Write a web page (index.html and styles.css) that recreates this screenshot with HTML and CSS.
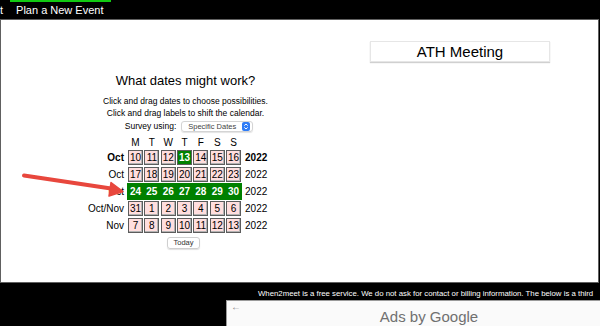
FILE: index.html
```html
<!DOCTYPE html>
<html lang="en">
<head>
    <meta charset="UTF-8">
    <title>When2meet - Plan a New Event</title>
    <link rel="stylesheet" href="styles.css">
</head>
<body>
    <div class="topbar">
        <span class="tab">t</span>
        <span class="tab active">Plan a New Event</span>
    </div>

    <div class="panel">
        <div class="left">
            <div class="title">What dates might work?</div>
            <div class="hint">Click and drag dates to choose possibilities.</div>
            <div class="hint">Click and drag labels to shift the calendar.</div>
            <div class="survey">
                Survey using:
                <span class="select">Specific Dates
                    <svg class="sel-icon" width="8" height="9" viewBox="0 0 8 9">
                        <rect width="8" height="9" rx="2" fill="#2f7cf6"/>
                        <path d="M2.3 3.6 L4 2 L5.7 3.6 M2.3 5.4 L4 7 L5.7 5.4" stroke="#fff" stroke-width="1" fill="none"/>
                    </svg>
                </span>
            </div>

            <div class="calendar">
                <div class="week head">
                    <span class="month"></span>
                    <div class="days">
                        <span class="dh">M</span><span class="dh">T</span><span class="dh">W</span><span class="dh">T</span><span class="dh">F</span><span class="dh">S</span><span class="dh">S</span>
                    </div>
                </div>
                <div class="week">
                    <span class="month bold">Oct</span>
                    <div class="days">
                        <span class="day">10</span><span class="day">11</span><span class="day">12</span><span class="day on">13</span><span class="day">14</span><span class="day">15</span><span class="day">16</span>
                    </div>
                    <span class="year bold">2022</span>
                </div>
                <div class="week">
                    <span class="month">Oct</span>
                    <div class="days">
                        <span class="day">17</span><span class="day">18</span><span class="day">19</span><span class="day">20</span><span class="day">21</span><span class="day">22</span><span class="day">23</span>
                    </div>
                    <span class="year">2022</span>
                </div>
                <div class="week">
                    <span class="month">Oct</span>
                    <div class="days sel">
                        <span class="day">24</span><span class="day">25</span><span class="day">26</span><span class="day">27</span><span class="day">28</span><span class="day">29</span><span class="day">30</span>
                    </div>
                    <span class="year">2022</span>
                </div>
                <div class="week">
                    <span class="month">Oct/Nov</span>
                    <div class="days">
                        <span class="day">31</span><span class="day">1</span><span class="day">2</span><span class="day">3</span><span class="day">4</span><span class="day">5</span><span class="day">6</span>
                    </div>
                    <span class="year">2022</span>
                </div>
                <div class="week">
                    <span class="month">Nov</span>
                    <div class="days">
                        <span class="day">7</span><span class="day">8</span><span class="day">9</span><span class="day">10</span><span class="day">11</span><span class="day">12</span><span class="day">13</span>
                    </div>
                    <span class="year">2022</span>
                </div>
            </div>
            <div class="today-row"><span class="today">Today</span></div>
        </div>

        <div class="right">
            <div class="event-name">ATH Meeting</div>
        </div>
    </div>

    <div class="footer">
        <div class="notice">When2meet is a free service. We do not ask for contact or billing information. The below is a third</div>
        <div class="ad">
            <span class="ad-back">&larr;</span>
            <span class="ad-text">Ads by Google</span>
        </div>
    </div>

    <!-- annotation arrow drawn over the calendar -->
    <svg class="arrow" width="140" height="210" viewBox="0 0 140 210">
        <line x1="24" y1="175.5" x2="111" y2="188.5" stroke="#e8473d" stroke-width="4" stroke-linecap="round"/>
        <polygon points="123,191.5 109,196 111,182.5" fill="#e8473d" stroke="#e8473d" stroke-width="1.5" stroke-linejoin="round"/>
    </svg>
</body>
</html>
```

FILE: styles.css
```css
body {
    margin: 0;
    width: 600px;
    height: 326px;
    overflow: hidden;
    background-color: #000;
    font-family: 'Liberation Sans', Arial, sans-serif;
    color: #000;
    position: relative;
}
.topbar {
    height: 19px;
    display: flex;
    align-items: stretch;
    color: #fff;
    font-size: 11px;
}
.tab {
    line-height: 17px;
    padding-top: 2px;
}
.tab.active {
    margin-left: 7px;
    padding: 0 7px 0 6px;
    border-top: 2px solid #12c912;
}
.panel {
    height: 262px;
    width: 597px;
    background-color: #fff;
    border: 1px solid #606060;
    display: flex;
}
.left {
    width: 369px;
    text-align: center;
    padding-top: 53px;
}
.title {
    font-size: 13px;
    line-height: 16px;
    margin-bottom: 6px;
}
.hint {
    font-size: 8.5px;
    line-height: 12px;
}
.survey {
    font-size: 8.5px;
    line-height: 14px;
    height: 14px;
    margin-bottom: 4px;
    display: flex;
    justify-content: center;
    align-items: center;
    gap: 5px;
    padding-left: 7px;
}
.select {
    width: 72px;
    height: 11px;
    box-sizing: border-box;
    border: 1px solid #d4d4d4;
    border-radius: 3px;
    font-size: 7.5px;
    line-height: 9px;
    color: #444;
    text-align: left;
    padding-left: 6px;
    display: flex;
    align-items: center;
    justify-content: space-between;
    padding-right: 2px;
    box-shadow: 0 1px 1px #e4e4e4;
}
.sel-icon {
    display: block;
}
.calendar {
    margin-left: 83px;
    text-align: left;
}
.week {
    display: flex;
    align-items: center;
    height: 17px;
    font-size: 10px;
}
.week.head {
    height: 12px;
}
.month {
    width: 40px;
    text-align: right;
    margin-right: 3px;
}
.bold {
    font-weight: bold;
}
.days {
    display: flex;
    gap: 1.35px;
    padding: 1px;
}
.dh {
    width: 15px;
    text-align: center;
    font-size: 10px;
    line-height: 12px;
}
.day {
    width: 15px;
    height: 15px;
    box-sizing: border-box;
    border: 1px solid #5c5c5c;
    box-shadow: inset -1px -1px 0 #b3b3b3;
    background-color: #ffdede;
    text-align: center;
    line-height: 13px;
    font-size: 10px;
}
.day.on {
    background-color: #008000;
    color: #fff;
    font-weight: bold;
    box-shadow: none;
}
.days.sel {
    background-color: #008000;
}
.days.sel .day {
    background-color: #008000;
    border-color: #008000;
    box-shadow: none;
    color: #fff;
    font-weight: bold;
}
.year {
    margin-left: 3px;
}
.today-row {
    margin-top: 3px;
    display: flex;
    justify-content: center;
}
.today {
    font-size: 7.5px;
    line-height: 10px;
    padding: 0 5px;
    border: 1px solid #cfcfcf;
    border-radius: 3px;
    color: #333;
    box-shadow: 0 1px 1px #e0e0e0;
    margin-right: 4px;
}
.right {
    padding-top: 21px;
}
.event-name {
    width: 180px;
    height: 21px;
    box-sizing: border-box;
    border: 1px solid #e6e6e6;
    box-shadow: 0 1px 1px #d0d0d0;
    text-align: center;
    font-size: 15px;
    line-height: 19px;
}
.footer {
    padding-top: 5px;
}
.notice {
    color: #fff;
    font-size: 7.8px;
    line-height: 11px;
    white-space: nowrap;
    padding-left: 258px;
    margin-bottom: 1px;
}
.ad {
    margin-left: 226px;
    width: 420px;
    height: 40px;
    box-sizing: border-box;
    border: 1px solid #9a9a9a;
    background-color: #fafafa;
    position: relative;
    text-align: center;
}
.ad-back {
    position: absolute;
    left: 4px;
    top: 1px;
    font-size: 10px;
    line-height: 10px;
    color: #8a8a8a;
}
.ad-text {
    display: block;
    padding-top: 7px;
    font-size: 15px;
    color: #707070;
    padding-right: 14px;
}
.arrow {
    position: absolute;
    left: 0;
    top: 0;
}
```
